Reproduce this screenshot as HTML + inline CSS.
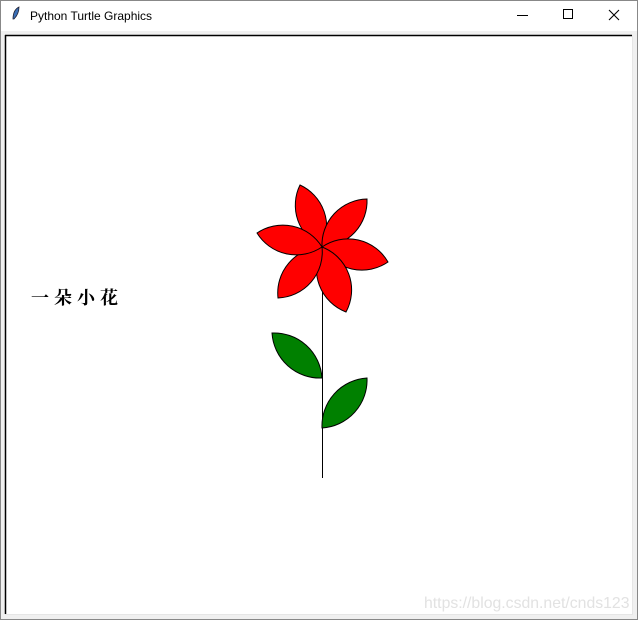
<!DOCTYPE html>
<html><head><meta charset="utf-8"><style>
body{margin:0;width:638px;height:620px;overflow:hidden;background:#f0f0f0;font-family:"Liberation Sans",sans-serif;}
</style></head><body>
<svg width="638" height="620" xmlns="http://www.w3.org/2000/svg" style="position:absolute;left:0;top:0">
<rect x="0" y="0" width="638" height="620" fill="#f0f0f0"/>
<rect x="0.5" y="0.5" width="637" height="619" fill="none" stroke="#888"/>
<rect x="1" y="1" width="636" height="30" fill="#fff"/>
<g transform="translate(12,7)"><path d="M7 0 C3 2 1 6 1 12 L2 12 C5 9 7 5 7 0Z" fill="#3a6fb5" stroke="#223" stroke-width="0.8"/></g>
<text x="30" y="20" font-size="12" fill="#000" font-family="Liberation Sans, sans-serif">Python Turtle Graphics</text>
<line x1="517" y1="15.5" x2="528" y2="15.5" stroke="#000"/>
<rect x="563.5" y="9.5" width="9" height="9" fill="none" stroke="#000"/>
<path d="M609 10 L619 20 M619 10 L609 20" stroke="#000" stroke-width="1.1"/>
<rect x="5" y="35" width="627" height="579" fill="#fff"/>
<line x1="5" y1="35.5" x2="632" y2="35.5" stroke="#000" stroke-width="1.5"/>
<line x1="5.5" y1="35" x2="5.5" y2="614" stroke="#000" stroke-width="1.5"/>
<line x1="632.5" y1="35" x2="632.5" y2="614" stroke="#e6e6e6"/>
<line x1="5" y1="614.5" x2="633" y2="614.5" stroke="#e6e6e6"/>
<line x1="322.5" y1="247" x2="322.5" y2="478" stroke="#000"/>
<g fill="#008000" stroke="#000" stroke-width="1">
<path d="M272 333 A48 48 0 0 1 322 378 A48 48 0 0 1 272 333Z"/>
<path d="M322 428 A48 48 0 0 1 367 378 A48 48 0 0 1 322 428Z"/>
</g>
<g fill="#ff0000" stroke="#000" stroke-width="1">
<path d="M322 247 A46 46 0 0 1 300 185 A46 46 0 0 1 322 247Z"/>
<path d="M322 247 A46 46 0 0 1 367 199 A46 46 0 0 1 322 247Z"/>
<path d="M322 247 A46 46 0 0 1 388 262 A46 46 0 0 1 322 247Z"/>
<path d="M322 247 A46 46 0 0 1 346 312 A46 46 0 0 1 322 247Z"/>
<path d="M322 247 A46 46 0 0 1 278 298 A46 46 0 0 1 322 247Z"/>
<path d="M322 247 A46 46 0 0 1 257 233 A46 46 0 0 1 322 247Z"/>
</g>
<text x="31" y="304" font-size="18" font-weight="bold" letter-spacing="5" fill="#000" font-family="Noto Serif CJK SC, serif">一朵小花</text>
<text x="424" y="608" font-size="15.8" fill="#e2e2e2" font-family="Liberation Sans, sans-serif">https://blog.csdn.net/cnds123</text>
</svg>
</body></html>
